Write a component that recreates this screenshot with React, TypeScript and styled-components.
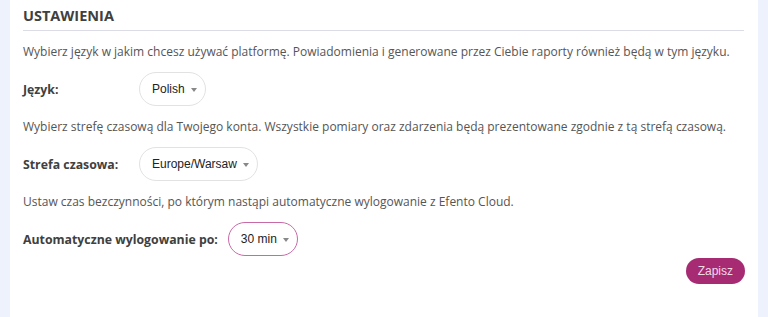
import React from 'react';
import styled, { createGlobalStyle } from 'styled-components';

const colors = {
  tlo: '#eef2fd',
  karta: '#ffffff',
  tekst: '#555555',
  ciemny: '#404040',
  linia: '#dcdce6',
  ramka: '#e2e2e2',
  aktywny: '#c86aa8',
  przycisk: '#a62b72',
};

const GlobalStyle = createGlobalStyle`
  html, body {
    margin: 0;
    padding: 0;
    background: ${colors.tlo};
  }
  body {
    font-family: 'Open Sans', 'Liberation Sans', sans-serif;
  }
`;

interface Ustawienie {
  opis: string;
  etykieta: string;
  wartosc: string;
  aktywny?: boolean;
}

const ustawienia: Ustawienie[] = [
  {
    opis: 'Wybierz język w jakim chcesz używać platformę. Powiadomienia i generowane przez Ciebie raporty również będą w tym języku.',
    etykieta: 'Język:',
    wartosc: 'Polish',
  },
  {
    opis: 'Wybierz strefę czasową dla Twojego konta. Wszystkie pomiary oraz zdarzenia będą prezentowane zgodnie z tą strefą czasową.',
    etykieta: 'Strefa czasowa:',
    wartosc: 'Europe/Warsaw',
  },
  {
    opis: 'Ustaw czas bezczynności, po którym nastąpi automatyczne wylogowanie z Efento Cloud.',
    etykieta: 'Automatyczne wylogowanie po:',
    wartosc: '30 min',
    aktywny: true,
  },
];

export default function App() {
  return (
    <Strona>
      <GlobalStyle />
      <Karta>
        <Tytul>USTAWIENIA</Tytul>
        {ustawienia.map((u) => (
          <Sekcja key={u.etykieta}>
            <Opis>{u.opis}</Opis>
            <Wiersz>
              <Etykieta>{u.etykieta}</Etykieta>
              <Wybor aktywny={u.aktywny}>
                {u.wartosc}
                <Strzalka />
              </Wybor>
            </Wiersz>
          </Sekcja>
        ))}
        <Stopka>
          <Przycisk>Zapisz</Przycisk>
        </Stopka>
      </Karta>
    </Strona>
  );
}

const Strona = styled.div`
  display: flex;
  height: 317px;
  padding: 0 10px;
`;

const Karta = styled.main`
  flex-grow: 1;
  background: ${colors.karta};
  padding: 0 13px;
  display: flex;
  flex-direction: column;
`;

const Tytul = styled.h2`
  margin: 0 1px 0 0;
  padding: 8px 0 6px;
  font-size: 14.5px;
  line-height: 16px;
  font-weight: 700;
  color: ${colors.ciemny};
  border-bottom: 1px solid ${colors.linia};
`;

const Sekcja = styled.section`
  display: flex;
  flex-direction: column;
`;

const Opis = styled.p`
  margin: 13px 0 0;
  font-size: 12px;
  line-height: 16px;
  color: ${colors.tekst};
`;

const Wiersz = styled.div`
  display: flex;
  align-items: center;
  margin-top: 12px;
`;

const Etykieta = styled.span`
  min-width: 106px;
  margin-right: 10px;
  font-size: 12.3px;
  font-weight: 700;
  color: ${colors.ciemny};
`;

const Wybor = styled.div<{ aktywny?: boolean }>`
  display: flex;
  align-items: center;
  gap: 6px;
  height: 32px;
  padding: 0 8px 0 12px;
  border: 1px solid ${({ aktywny }) => (aktywny ? colors.aktywny : colors.ramka)};
  border-radius: 17px;
  font-family: 'Liberation Sans', Arial, sans-serif;
  font-size: 12px;
  color: #222;
`;

const Strzalka = styled.span`
  width: 0;
  height: 0;
  border-left: 3.5px solid transparent;
  border-right: 3.5px solid transparent;
  border-top: 4px solid #888;
  margin-top: 1px;
`;

const Stopka = styled.div`
  display: flex;
  justify-content: flex-end;
  margin-top: 2px;
`;

const Przycisk = styled.button`
  height: 26px;
  padding: 0 12px;
  border: none;
  border-radius: 13px;
  background: ${colors.przycisk};
  color: #f3d9e8;
  font-family: 'Liberation Sans', Arial, sans-serif;
  font-size: 12px;
`;
